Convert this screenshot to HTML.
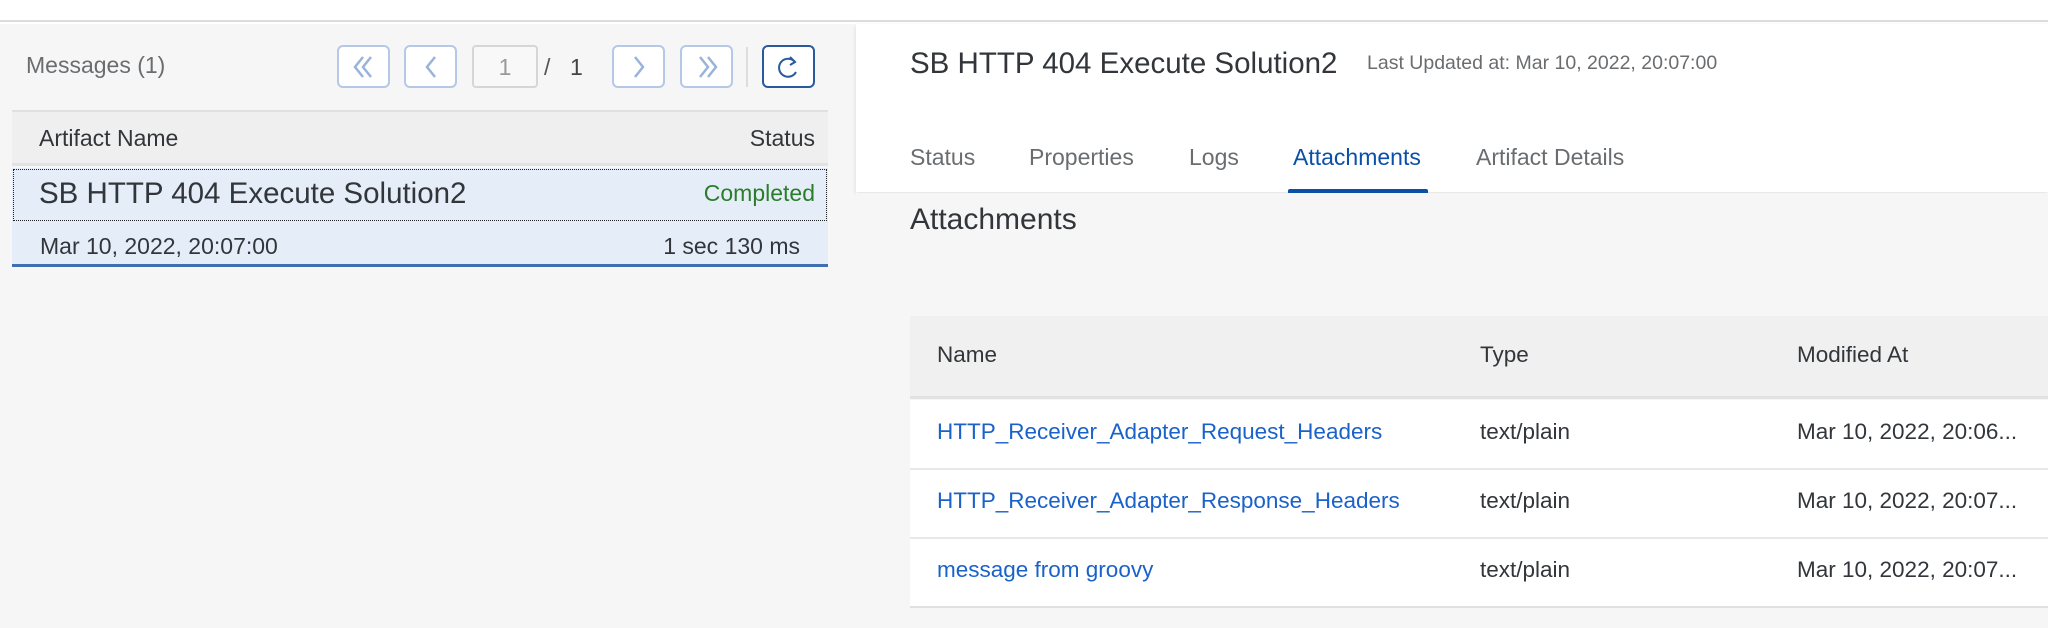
<!DOCTYPE html>
<html><head><meta charset="utf-8"><style>
*{margin:0;padding:0;box-sizing:border-box}
body{width:2048px;height:628px;overflow:hidden;background:#fff;font-family:"Liberation Sans",sans-serif;position:relative;color:#32363a}
.a{position:absolute}
.btn{position:absolute;top:45px;width:53px;height:43px;border:2px solid #b5c8e6;border-radius:6px;background:#fff}
.btn svg{position:absolute;left:50%;top:50%;transform:translate(-50%,-50%)}
.t{position:absolute;white-space:nowrap}
</style></head><body>
<div class="a" style="left:0;top:0;width:2048px;height:22px;background:#fff;border-bottom:2px solid #dcdcdc"></div>
<div class="a" style="left:0;top:24px;width:856px;height:604px;background:#f6f6f6"></div>
<div class="t" style="left:26px;top:52px;font-size:23px;color:#6a6d70">Messages (1)</div>
<div class="btn" style="left:337px"><svg width="28" height="26" viewBox="0 0 28 26"><path d="M13 3 L5 13 L13 23 M21 3 L13 13 L21 23" fill="none" stroke="#9ab3db" stroke-width="2.5"/></svg></div>
<div class="btn" style="left:404px"><svg width="20" height="26" viewBox="0 0 20 26"><path d="M14 3 L6 13 L14 23" fill="none" stroke="#9ab3db" stroke-width="2.5"/></svg></div>
<div class="a" style="left:472px;top:45px;width:66px;height:43px;border:2px solid #d6d6d6;border-radius:4px;background:#f8f8f8;color:#999;font-size:23px;text-align:center;line-height:41px">1</div>
<div class="t" style="left:544px;top:54px;font-size:23px;color:#555">/</div>
<div class="t" style="left:570px;top:54px;font-size:23px;color:#444">1</div>
<div class="btn" style="left:612px"><svg width="20" height="26" viewBox="0 0 20 26"><path d="M6 3 L14 13 L6 23" fill="none" stroke="#9ab3db" stroke-width="2.5"/></svg></div>
<div class="btn" style="left:680px"><svg width="28" height="26" viewBox="0 0 28 26"><path d="M7 3 L15 13 L7 23 M15 3 L23 13 L15 23" fill="none" stroke="#9ab3db" stroke-width="2.5"/></svg></div>
<div class="a" style="left:746px;top:47px;width:2px;height:40px;background:#ddd"></div>
<div class="btn" style="left:762px;border-color:#2a5a9e"><svg width="26" height="28" viewBox="0 0 26 28"><path d="M19 9 A9 9 0 1 0 20 19" fill="none" stroke="#2a5a9e" stroke-width="2"/><path d="M14 4 L19 9 L14 12" fill="none" stroke="#2a5a9e" stroke-width="2"/></svg></div>
<div class="a" style="left:12px;top:110px;width:816px;height:56px;background:#efefef;border-top:2px solid #e0e0e0;border-bottom:3px solid #e2e2e2"></div>
<div class="t" style="left:39px;top:125px;font-size:23px;color:#32363a">Artifact Name</div>
<div class="t" style="right:1233px;top:125px;font-size:23px;color:#32363a">Status</div>
<div class="a" style="left:12px;top:168px;width:816px;height:99px;background:#e5eef8;border-bottom:3px solid #3d6fb2"></div>
<div class="a" style="left:13px;top:169px;width:814px;height:52px;border:1px dotted #222"></div>
<div class="t" style="left:39px;top:177px;font-size:29.5px;color:#32363a">SB HTTP 404 Execute Solution2</div>
<div class="t" style="right:1233px;top:180px;font-size:23px;color:#2b7d2b">Completed</div>
<div class="t" style="left:40px;top:233px;font-size:23px;color:#32363a">Mar 10, 2022, 20:07:00</div>
<div class="t" style="right:1248px;top:233px;font-size:23px;color:#32363a">1 sec 130 ms</div>
<div class="a" style="left:856px;top:24px;width:1192px;height:168px;background:#fff;box-shadow:0 2px 4px rgba(0,0,0,.12)"></div>
<div class="a" style="left:856px;top:193px;width:1192px;height:435px;background:#f6f6f6"></div>
<div class="t" style="left:910px;top:47px;font-size:29.5px;color:#32363a">SB HTTP 404 Execute Solution2</div>
<div class="t" style="left:1367px;top:52px;font-size:19.5px;color:#6a6d70">Last Updated at: Mar 10, 2022, 20:07:00</div>
<div class="t" style="left:910px;top:144px;font-size:23px;color:#6a6d70">Status</div>
<div class="t" style="left:1029px;top:144px;font-size:23px;color:#6a6d70">Properties</div>
<div class="t" style="left:1189px;top:144px;font-size:23px;color:#6a6d70">Logs</div>
<div class="t" style="left:1293px;top:144px;font-size:23px;color:#0a4fa8">Attachments</div>
<div class="t" style="left:1476px;top:144px;font-size:23px;color:#6a6d70">Artifact Details</div>
<div class="a" style="left:1288px;top:189px;width:140px;height:4px;background:#0a4fa8;border-radius:2px 2px 0 0"></div>
<div class="t" style="left:910px;top:203px;font-size:30px;color:#32363a">Attachments</div>
<div class="a" style="left:910px;top:316px;width:1138px;height:83px;background:#f0f0f0;border-bottom:3px solid #e2e2e2"></div>
<div class="a" style="left:910px;top:400px;width:1138px;height:207px;background:#fff"></div>
<div class="a" style="left:910px;top:468px;width:1138px;height:2px;background:#e8e8e8"></div>
<div class="a" style="left:910px;top:537px;width:1138px;height:2px;background:#e8e8e8"></div>
<div class="a" style="left:910px;top:606px;width:1138px;height:2px;background:#e0e0e0"></div>
<div class="t" style="left:937px;top:342px;font-size:22.5px;color:#32363a">Name</div>
<div class="t" style="left:1480px;top:342px;font-size:22.5px;color:#32363a">Type</div>
<div class="t" style="left:1797px;top:342px;font-size:22.5px;color:#32363a">Modified At</div>
<div class="t" style="left:937px;top:419px;font-size:22.5px;color:#1a62c9">HTTP_Receiver_Adapter_Request_Headers</div>
<div class="t" style="left:1480px;top:419px;font-size:22.5px;color:#32363a">text/plain</div>
<div class="t" style="left:1797px;top:419px;font-size:22.5px;color:#32363a">Mar 10, 2022, 20:06...</div>
<div class="t" style="left:937px;top:488px;font-size:22.5px;color:#1a62c9">HTTP_Receiver_Adapter_Response_Headers</div>
<div class="t" style="left:1480px;top:488px;font-size:22.5px;color:#32363a">text/plain</div>
<div class="t" style="left:1797px;top:488px;font-size:22.5px;color:#32363a">Mar 10, 2022, 20:07...</div>
<div class="t" style="left:937px;top:557px;font-size:22.5px;color:#1a62c9">message from groovy</div>
<div class="t" style="left:1480px;top:557px;font-size:22.5px;color:#32363a">text/plain</div>
<div class="t" style="left:1797px;top:557px;font-size:22.5px;color:#32363a">Mar 10, 2022, 20:07...</div>
</body></html>
